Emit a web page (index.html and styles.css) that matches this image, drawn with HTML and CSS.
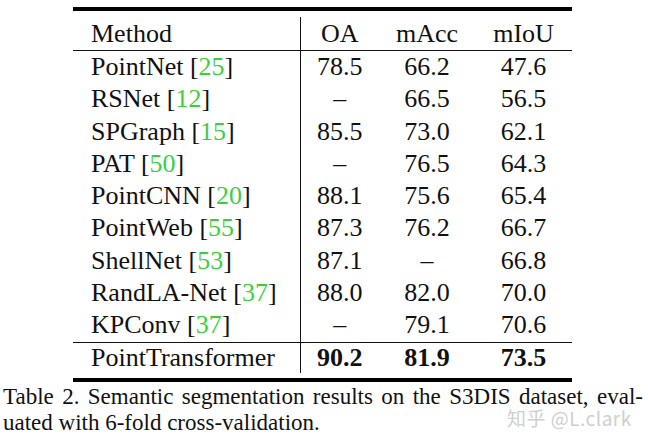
FILE: index.html
```html
<!DOCTYPE html>
<html>
<head>
<meta charset="utf-8">
<link rel="stylesheet" href="styles.css">
</head>
<body>
<div class="page">
  <div class="tbl">
    <div class="thick"></div>
    <table>
      <colgroup>
        <col class="c1"><col class="c2"><col class="c3"><col class="c4">
      </colgroup>
      <thead>
        <tr class="head"><th class="m">Method</th><th>OA</th><th>mAcc</th><th>mIoU</th></tr>
      </thead>
      <tbody>
        <tr><td class="m">PointNet [<span class="cite">25</span>]</td><td>78.5</td><td>66.2</td><td>47.6</td></tr>
        <tr><td class="m">RSNet [<span class="cite">12</span>]</td><td>–</td><td>66.5</td><td>56.5</td></tr>
        <tr><td class="m">SPGraph [<span class="cite">15</span>]</td><td>85.5</td><td>73.0</td><td>62.1</td></tr>
        <tr><td class="m">PAT [<span class="cite">50</span>]</td><td>–</td><td>76.5</td><td>64.3</td></tr>
        <tr><td class="m">PointCNN [<span class="cite">20</span>]</td><td>88.1</td><td>75.6</td><td>65.4</td></tr>
        <tr><td class="m">PointWeb [<span class="cite">55</span>]</td><td>87.3</td><td>76.2</td><td>66.7</td></tr>
        <tr><td class="m">ShellNet [<span class="cite">53</span>]</td><td>87.1</td><td>–</td><td>66.8</td></tr>
        <tr><td class="m">RandLA-Net [<span class="cite">37</span>]</td><td>88.0</td><td>82.0</td><td>70.0</td></tr>
        <tr><td class="m">KPConv [<span class="cite">37</span>]</td><td>–</td><td>79.1</td><td>70.6</td></tr>
        <tr class="last"><td class="m">PointTransformer</td><td class="b">90.2</td><td class="b">81.9</td><td class="b">73.5</td></tr>
      </tbody>
    </table>
    <div class="thick"></div>
  </div>
  <div class="caption">
    <div class="l1">Table 2. Semantic segmentation results on the S3DIS dataset, eval-</div>
    <div class="l2">uated with 6-fold cross-validation.</div>
    <div class="wm">知乎 @L.clark</div>
  </div>
</div>
</body>
</html>
```

FILE: styles.css
```css
html, body {
  margin: 0;
  padding: 0;
  background: #ffffff;
}
.page {
  width: 648px;
  height: 439px;
  overflow: hidden;
  font-family: "Liberation Serif", "Times New Roman", serif;
  color: #111111;
}
.tbl {
  margin-left: 73px;
  width: 499px;
  padding-top: 7px;
}
.thick {
  height: 4px;
  background: #000;
}
table {
  border-collapse: collapse;
  width: 499px;
  table-layout: fixed;
  margin: 6px 0 5px 0;
  font-size: 26px;
}
col.c1 { width: 227px; }
col.c2 { width: 79px; }
col.c3 { width: 96px; }
col.c4 { width: 97px; }
th, td {
  padding: 0;
  text-align: center;
  font-weight: normal;
  line-height: 32.3px;
  white-space: nowrap;
}
th.m, td.m {
  text-align: left;
  padding-left: 18px;
  border-right: 1px solid #111;
}
tr.head th {
  line-height: 33px;
  border-bottom: 1px solid #111;
}
tr.last td {
  border-top: 1px solid #111;
  line-height: 30px;
}
td.b { font-weight: bold; }
.cite { color: #3ccf3c; }
.caption {
  position: relative;
  font-size: 23px;
  line-height: 26px;
  padding: 2px 5px 0 3px;
}
.l1 {
  text-align: justify;
  text-align-last: justify;
}
.wm {
  position: absolute;
  left: 507px;
  top: 25px;
  font-family: "Noto Sans CJK SC", "Noto Sans", sans-serif;
  font-size: 19px;
  line-height: 22px;
  color: #cfcfcf;
  letter-spacing: 0.5px;
}
```
